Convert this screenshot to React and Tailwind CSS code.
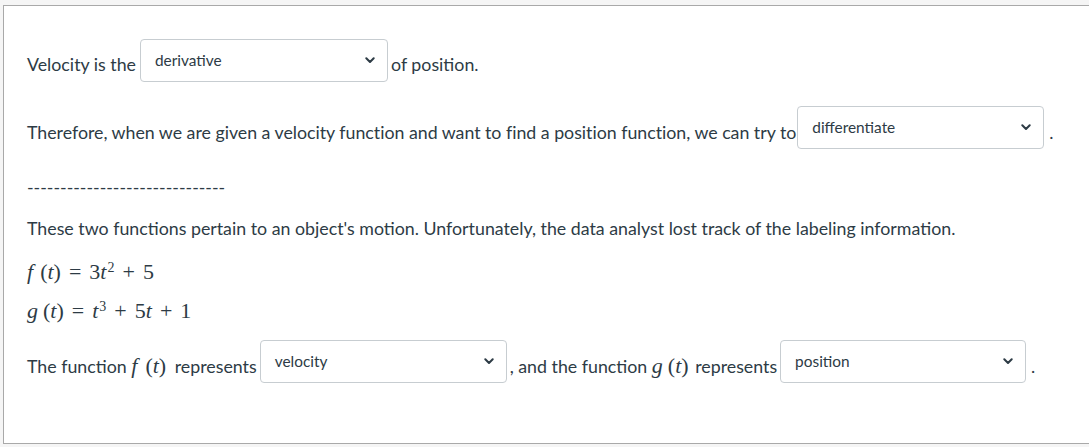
import React from "react";

function Chevron() {
  return (
    <svg width="10" height="7" viewBox="0 0 10 7" className="shrink-0">
      <path d="M1.3 1.3 L5 5 L8.7 1.3" fill="none" stroke="#2d3b45" strokeWidth="2" strokeLinecap="round" strokeLinejoin="round" />
    </svg>
  );
}

function Select({ value, w = "w-[248px]" }) {
  return (
    <div className={`${w} h-[43px] shrink-0 border border-[#c7cdd1] rounded-[4px] bg-white flex items-center justify-between pl-[14px] pr-[12px] mx-[3px]`}>
      <span className="text-[15.4px] leading-[20px] text-[#2d3b45] -mt-[1px]">{value}</span>
      <span className="-mt-[1px]"><Chevron /></span>
    </div>
  );
}

const SERIF = { fontFamily: "'Liberation Serif', 'DejaVu Serif', serif" };
const M = ({ children, className = "" }) => (
  <span className={`italic ${className}`} style={SERIF}>{children}</span>
);
const R = ({ children, className = "" }) => (
  <span className={className} style={SERIF}>{children}</span>
);
const Op = ({ children }) => (
  <span className="mx-[8px]" style={SERIF}>{children}</span>
);
const Sup = ({ children }) => (
  <sup className="text-[14px] ml-[1px]" style={SERIF}>{children}</sup>
);

export default function App() {
  return (
    <div className="w-[1089px] h-[447px] bg-[#f5f5f5] pt-[5px] pl-[3px] overflow-hidden" style={{ fontFamily: "Lato, 'Noto Sans', sans-serif" }}>
      <div className="h-[439px] bg-white border-t border-l border-b border-[#a9a9a9] pl-[23px] flex flex-col text-[17.8px] leading-[26px] text-[#2d3b45]">
        <div className="flex items-end mt-[33px]">
          <span className="pb-[5px] mr-[1px]">Velocity is the</span>
          <Select value="derivative" w="w-[248px]" />
          <span className="pb-[5px]">of position.</span>
        </div>
        <div className="flex items-end mt-[24px]">
          <span className="pb-[4px] -mr-[2px] tracking-[-0.02px]">Therefore, when we are given a velocity function and want to find a position function, we can try to</span>
          <Select value="differentiate" w="w-[247px]" />
          <span className="pb-[4px] pl-[2px]">.</span>
        </div>
        <div className="mt-[25px]">------------------------------</div>
        <div className="mt-[15px]">These two functions pertain to an object's motion. Unfortunately, the data analyst lost track of the labeling information.</div>
        <div className="mt-[15px] text-[22px] leading-[30px]">
          <M>f</M><R className="ml-[7px]">(</R><M>t</M><R>)</R><Op>=</Op><R>3</R><M>t</M><Sup>2</Sup><Op>+</Op><R>5</R>
        </div>
        <div className="mt-[8px] text-[22px] leading-[30px]">
          <M>g</M><R className="ml-[5px]">(</R><M>t</M><R>)</R><Op>=</Op><M>t</M><Sup>3</Sup><Op>+</Op><R>5</R><M>t</M><Op>+</Op><R>1</R>
        </div>
        <div className="flex items-end mt-[14px]">
          <span className="pb-[4px]">The function <span className="text-[22px] leading-[20px]"><M className="mr-[1px]">f</M><R className="ml-[7px]">(</R><M>t</M><R className="mr-[4px]">)</R></span> represents</span>
          <Select value="velocity" w="w-[247px]" />
          <span className="pb-[4px]">, and the function <span className="text-[22px] leading-[20px]"><M>g</M><R className="ml-[5px]">(</R><M>t</M><R className="mr-[2px]">)</R></span> represents</span>
          <Select value="position" w="w-[246px]" />
          <span className="pb-[4px] pl-[2px]">.</span>
        </div>
      </div>
    </div>
  );
}
